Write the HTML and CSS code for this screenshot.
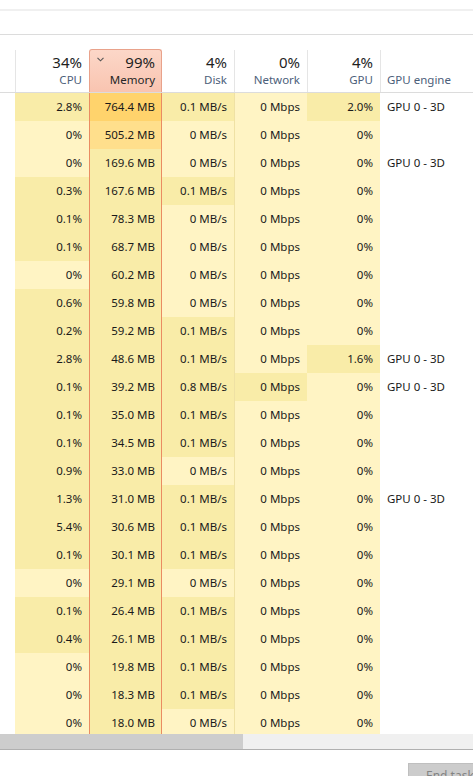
FILE: index.html
```html
<!DOCTYPE html>
<html lang="en">

<head>
    <meta charset="UTF-8">
    <meta name="viewport" content="width=device-width, initial-scale=1.0">
    <title>Task Manager</title>
    <link rel="stylesheet" href="styles.css">
</head>

<body>
    <div class="app">
        <!-- tab strip remains -->
        <div class="topbar">
            <div class="band"></div>
            <div class="tabline"></div>
        </div>

        <!-- column headers -->
        <div class="head">
            <div class="hc blank"></div>
            <div class="hc sep">
                <div class="pct">34%</div>
                <div class="lbl">CPU</div>
            </div>
            <div class="hc mem">
                <div class="pct">
                    <svg class="chev" width="7" height="5" viewBox="0 0 7 5"><polyline points="0.5,0.8 3.5,3.8 6.5,0.8" fill="none" stroke="#555" stroke-width="1.1"/></svg>
                    <span>99%</span>
                </div>
                <div class="lbl">Memory</div>
            </div>
            <div class="hc">
                <div class="pct">4%</div>
                <div class="lbl">Disk</div>
            </div>
            <div class="hc sep">
                <div class="pct">0%</div>
                <div class="lbl">Network</div>
            </div>
            <div class="hc sep">
                <div class="pct">4%</div>
                <div class="lbl">GPU</div>
            </div>
            <div class="hc sep engine">
                <div class="pct"></div>
                <div class="lbl">GPU engine</div>
            </div>
        </div>

        <!-- process rows -->
        <div class="rows">
            <div class="row"><span></span><span class="c hi">2.8%</span><span class="c m m1">764.4 MB</span><span class="c hi">0.1 MB/s</span><span class="c lo net">0 Mbps</span><span class="c hi">2.0%</span><span class="e">GPU 0 - 3D</span></div>
            <div class="row"><span></span><span class="c lo">0%</span><span class="c m m2">505.2 MB</span><span class="c lo">0 MB/s</span><span class="c lo net">0 Mbps</span><span class="c lo">0%</span><span class="e"></span></div>
            <div class="row"><span></span><span class="c lo">0%</span><span class="c m hi">169.6 MB</span><span class="c lo">0 MB/s</span><span class="c lo net">0 Mbps</span><span class="c lo">0%</span><span class="e">GPU 0 - 3D</span></div>
            <div class="row"><span></span><span class="c hi">0.3%</span><span class="c m hi">167.6 MB</span><span class="c hi">0.1 MB/s</span><span class="c lo net">0 Mbps</span><span class="c lo">0%</span><span class="e"></span></div>
            <div class="row"><span></span><span class="c hi">0.1%</span><span class="c m hi">78.3 MB</span><span class="c lo">0 MB/s</span><span class="c lo net">0 Mbps</span><span class="c lo">0%</span><span class="e"></span></div>
            <div class="row"><span></span><span class="c hi">0.1%</span><span class="c m hi">68.7 MB</span><span class="c lo">0 MB/s</span><span class="c lo net">0 Mbps</span><span class="c lo">0%</span><span class="e"></span></div>
            <div class="row"><span></span><span class="c lo">0%</span><span class="c m hi">60.2 MB</span><span class="c lo">0 MB/s</span><span class="c lo net">0 Mbps</span><span class="c lo">0%</span><span class="e"></span></div>
            <div class="row"><span></span><span class="c hi">0.6%</span><span class="c m hi">59.8 MB</span><span class="c lo">0 MB/s</span><span class="c lo net">0 Mbps</span><span class="c lo">0%</span><span class="e"></span></div>
            <div class="row"><span></span><span class="c hi">0.2%</span><span class="c m hi">59.2 MB</span><span class="c hi">0.1 MB/s</span><span class="c lo net">0 Mbps</span><span class="c lo">0%</span><span class="e"></span></div>
            <div class="row"><span></span><span class="c hi">2.8%</span><span class="c m hi">48.6 MB</span><span class="c hi">0.1 MB/s</span><span class="c lo net">0 Mbps</span><span class="c hi">1.6%</span><span class="e">GPU 0 - 3D</span></div>
            <div class="row"><span></span><span class="c hi">0.1%</span><span class="c m hi">39.2 MB</span><span class="c hi">0.8 MB/s</span><span class="c hi net">0 Mbps</span><span class="c lo">0%</span><span class="e">GPU 0 - 3D</span></div>
            <div class="row"><span></span><span class="c hi">0.1%</span><span class="c m hi">35.0 MB</span><span class="c hi">0.1 MB/s</span><span class="c lo net">0 Mbps</span><span class="c lo">0%</span><span class="e"></span></div>
            <div class="row"><span></span><span class="c hi">0.1%</span><span class="c m hi">34.5 MB</span><span class="c hi">0.1 MB/s</span><span class="c lo net">0 Mbps</span><span class="c lo">0%</span><span class="e"></span></div>
            <div class="row"><span></span><span class="c hi">0.9%</span><span class="c m hi">33.0 MB</span><span class="c lo">0 MB/s</span><span class="c lo net">0 Mbps</span><span class="c lo">0%</span><span class="e"></span></div>
            <div class="row"><span></span><span class="c hi">1.3%</span><span class="c m hi">31.0 MB</span><span class="c hi">0.1 MB/s</span><span class="c lo net">0 Mbps</span><span class="c lo">0%</span><span class="e">GPU 0 - 3D</span></div>
            <div class="row"><span></span><span class="c hi">5.4%</span><span class="c m hi">30.6 MB</span><span class="c hi">0.1 MB/s</span><span class="c lo net">0 Mbps</span><span class="c lo">0%</span><span class="e"></span></div>
            <div class="row"><span></span><span class="c hi">0.1%</span><span class="c m hi">30.1 MB</span><span class="c hi">0.1 MB/s</span><span class="c lo net">0 Mbps</span><span class="c lo">0%</span><span class="e"></span></div>
            <div class="row"><span></span><span class="c lo">0%</span><span class="c m hi">29.1 MB</span><span class="c lo">0 MB/s</span><span class="c lo net">0 Mbps</span><span class="c lo">0%</span><span class="e"></span></div>
            <div class="row"><span></span><span class="c hi">0.1%</span><span class="c m hi">26.4 MB</span><span class="c hi">0.1 MB/s</span><span class="c lo net">0 Mbps</span><span class="c lo">0%</span><span class="e"></span></div>
            <div class="row"><span></span><span class="c hi">0.4%</span><span class="c m hi">26.1 MB</span><span class="c hi">0.1 MB/s</span><span class="c lo net">0 Mbps</span><span class="c lo">0%</span><span class="e"></span></div>
            <div class="row"><span></span><span class="c lo">0%</span><span class="c m hi">19.8 MB</span><span class="c hi">0.1 MB/s</span><span class="c lo net">0 Mbps</span><span class="c lo">0%</span><span class="e"></span></div>
            <div class="row"><span></span><span class="c lo">0%</span><span class="c m hi">18.3 MB</span><span class="c hi">0.1 MB/s</span><span class="c lo net">0 Mbps</span><span class="c lo">0%</span><span class="e"></span></div>
            <div class="row"><span></span><span class="c lo">0%</span><span class="c m hi">18.0 MB</span><span class="c lo">0 MB/s</span><span class="c lo net">0 Mbps</span><span class="c lo">0%</span><span class="e"></span></div>
        </div>

        <!-- horizontal scrollbar -->
        <div class="hscroll">
            <div class="thumb"></div>
        </div>

        <!-- footer -->
        <div class="footer">
            <span class="btn_end">End task</span>
        </div>
    </div>
</body>

</html>
```

FILE: styles.css
```css
/* reset */

* {
    margin: 0;
    padding: 0;
    box-sizing: border-box;
}

html,
body {
    background: white;
    overflow: hidden;
}

.app {
    width: 473px;
    height: 776px;
    overflow: hidden;
    font-family: "Noto Sans", "Segoe UI", sans-serif;
    color: #1a1a1a;
}

/* top strip */

.topbar {
    height: 49px;
    padding-top: 9px;
}

.topbar .band {
    height: 2px;
    background: #f0f0f0;
}

.topbar .tabline {
    height: 1px;
    margin-top: 23px;
    background: #dcdcdc;
}

/* headers */

.head,
.row {
    display: grid;
    grid-template-columns: 15px 74px 73px 72px 73px 73px 1fr;
}

.head {
    height: 44px;
    border-bottom: 1px solid #dcdcdc;
}

.hc {
    padding: 3px 7px 0 0;
    text-align: right;
}

.hc.sep {
    border-left: 1px solid #e5e5e5;
    margin-top: 1px;
    padding-top: 2px;
}

.hc .pct {
    height: 20px;
    line-height: 20px;
    font-size: 15px;
    color: #1f1f1f;
}

.hc .lbl {
    height: 16px;
    line-height: 16px;
    font-size: 11.5px;
    color: #4c607a;
}

.hc.mem {
    border: 1px solid #e9a28b;
    border-bottom: none;
    border-radius: 3px 3px 0 0;
    background: linear-gradient(#fcd7c8, #f9c4b0);
    padding-top: 2px;
    padding-right: 6px;
}

.hc.mem .pct {
    display: flex;
    justify-content: space-between;
    align-items: center;
    padding-left: 7px;
}

.hc.mem .chev {
    margin-top: -6px;
}

.hc.mem .lbl {
    color: #262626;
}

.hc.engine {
    text-align: left;
    padding-left: 6px;
}

/* rows */

.rows {
    height: 641px;
    overflow: hidden;
}

.row {
    height: 28px;
    font-size: 11.5px;
    line-height: 28px;
}

.row .c {
    text-align: right;
    padding-right: 7px;
    white-space: nowrap;
}

.row .lo {
    background: #fff4c4;
}

.row .hi {
    background: #f9eca8;
}

.row .m {
    border-left: 1px solid #ea8c62;
    border-right: 1px solid #ea8c62;
    padding-right: 6px;
}

.row .m1 {
    background: #ffd36c;
}

.row .m2 {
    background: #ffdf8c;
}

.row .net {
    border-left: 1px solid #efe1a4;
}

.row .e {
    padding-left: 7px;
    white-space: nowrap;
}

/* scrollbar */

.hscroll {
    height: 16px;
    background: #f0f0f0;
    border-bottom: 1px solid #b0b0b0;
}

.hscroll .thumb {
    width: 243px;
    height: 15px;
    background: #cdcdcd;
}

/* footer */

.footer {
    display: flex;
    padding: 13px 0 0 408px;
}

.btn_end {
    flex-shrink: 0;
    width: 76px;
    height: 24px;
    padding-left: 17px;
    line-height: 24px;
    font-size: 12px;
    color: #838383;
    background: #cccccc;
    border: 1px solid #bfbfbf;
}
```
